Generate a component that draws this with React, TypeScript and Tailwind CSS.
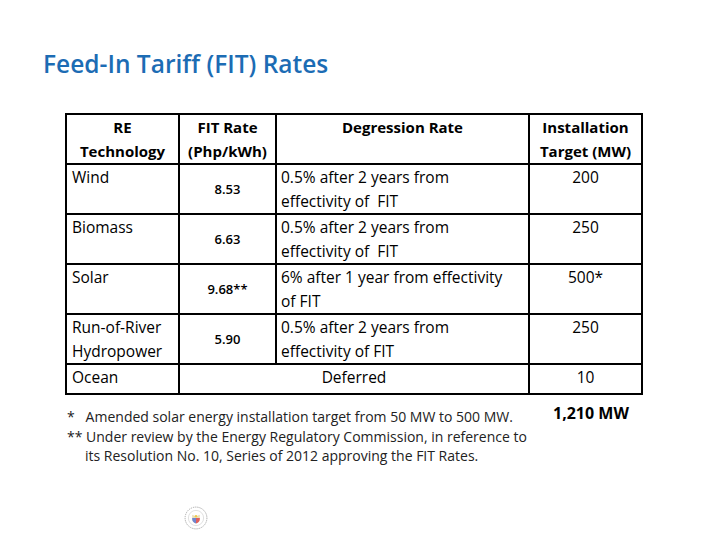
import React from "react";

const font = { fontFamily: "'Open Sans', Lato, sans-serif" };

function Seal() {
  return (
    <svg width="24" height="24" viewBox="0 0 22 22">
      <circle cx="11" cy="11" r="10" fill="#fff" stroke="#a8a8a8" strokeWidth="0.9" strokeDasharray="1.2 0.8" />
      <circle cx="11" cy="11" r="7" fill="none" stroke="#cfcfcf" strokeWidth="0.6" />
      <path d="M7.5 8 L11 9.5 L14.5 8 L14.5 12 Q14.5 15 11 16 Q7.5 15 7.5 12 Z" fill="#eadfb8" />
      <path d="M7.5 11 L11 11 L11 16 Q7.5 15 7.5 12 Z" fill="#6f86d0" />
      <path d="M11 11 L14.5 11 L14.5 12 Q14.5 15 11 16 Z" fill="#df5f5f" />
      <circle cx="11" cy="9.3" r="1.1" fill="#efc94a" />
    </svg>
  );
}

export default function App() {
  const cell = "border-2 border-black align-top p-0";
  const data = "border-2 border-black align-top p-0 text-[15.5px]";
  const rate = "border-2 border-black text-center align-middle text-[13px] font-semibold p-0";
  return (
    <div className="w-[720px] h-[540px] bg-white relative text-black" style={font}>
      <div className="pt-[48px] pl-[43px] text-[24.5px] leading-[32px] font-semibold text-[#1c6cb4]">
        Feed-In Tariff (FIT) Rates
      </div>
      <table className="ml-[65px] mt-[33px] border-collapse table-fixed text-[15px] leading-[24px]">
        <colgroup>
          <col className="w-[113px]" />
          <col className="w-[97px]" />
          <col className="w-[253px]" />
          <col className="w-[113px]" />
        </colgroup>
        <tbody>
          <tr className="h-[50px]">
            <td className={`${cell} text-center font-bold`}>RE<br />Technology</td>
            <td className={`${cell} text-center font-bold`}>FIT Rate<br />(Php/kWh)</td>
            <td className={`${cell} text-center font-bold`}>Degression Rate</td>
            <td className={`${cell} text-center font-bold`}>Installation<br />Target (MW)</td>
          </tr>
          <tr className="h-[50px]">
            <td className={`${data} pl-[5px]`}>Wind</td>
            <td className={rate}>8.53</td>
            <td className={`${data} pl-[4px]`}>0.5% after 2 years from<br />effectivity of&nbsp; FIT</td>
            <td className={`${data} text-center`}>200</td>
          </tr>
          <tr className="h-[50px]">
            <td className={`${data} pl-[5px]`}>Biomass</td>
            <td className={rate}>6.63</td>
            <td className={`${data} pl-[4px]`}>0.5% after 2 years from<br />effectivity of&nbsp; FIT</td>
            <td className={`${data} text-center`}>250</td>
          </tr>
          <tr className="h-[50px]">
            <td className={`${data} pl-[5px]`}>Solar</td>
            <td className={rate}>9.68**</td>
            <td className={`${data} pl-[4px]`}>6% after 1 year from effectivity<br />of FIT</td>
            <td className={`${data} text-center`}>500*</td>
          </tr>
          <tr className="h-[50px]">
            <td className={`${data} pl-[5px]`}>Run-of-River<br />Hydropower</td>
            <td className={rate}>5.90</td>
            <td className={`${data} pl-[4px]`}>0.5% after 2 years from<br />effectivity of FIT</td>
            <td className={`${data} text-center`}>250</td>
          </tr>
          <tr className="h-[30px]">
            <td className={`${data} pl-[5px]`}>Ocean</td>
            <td colSpan={2} className={`${data} text-center`}>Deferred</td>
            <td className={`${data} text-center`}>10</td>
          </tr>
        </tbody>
      </table>
      <div className="flex mt-[6px] ml-[67px]">
        <div className="w-[486px] text-[14px] leading-[19.5px] text-[#222] pt-[6px]">
          <div>*&nbsp;&nbsp; Amended solar energy installation target from 50 MW to 500 MW.</div>
          <div>** Under review by the Energy Regulatory Commission, in reference to</div>
          <div className="pl-[18px]">its Resolution No. 10, Series of 2012 approving the FIT Rates.</div>
        </div>
        <div className="text-[16px] font-bold leading-[25px]">1,210 MW</div>
      </div>
      <div className="absolute left-[184px] top-[506px]">
        <Seal />
      </div>
    </div>
  );
}
